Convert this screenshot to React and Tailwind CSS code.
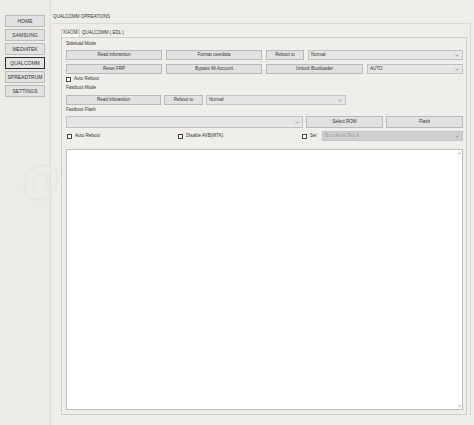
import React from "react";

const font = { fontFamily: '"Liberation Sans", Arial, sans-serif' };

function Btn({ children, className = "" }) {
  return (
    <div
      className={
        "flex items-center justify-center bg-[#e1e1e1] border border-[#b9b9b9] text-[4.5px] text-[#333] leading-none " +
        className
      }
    >
      {children}
    </div>
  );
}

function Chevron() {
  return (
    <svg width="4" height="3" viewBox="0 0 4 3" className="shrink-0">
      <path d="M0.5 0.6 L2 2.2 L3.5 0.6" fill="none" stroke="#777" strokeWidth="0.6" />
    </svg>
  );
}

function Select({ children, className = "", disabled = false }) {
  return (
    <div
      className={
        "flex items-center justify-between pl-[2px] pr-[3px] border text-[4.5px] leading-none " +
        (disabled
          ? "bg-[#cfcfcf] border-[#c4c4c4] text-[#9a9a9a] "
          : "bg-[#e6e6e6] border-[#c2c2c2] text-[#333] ") +
        className
      }
    >
      <span>{children}</span>
      <Chevron />
    </div>
  );
}

function Check({ label, className = "" }) {
  return (
    <div className={"flex items-center gap-[3px] " + className}>
      <div className="w-[5px] h-[5px] bg-white border border-[#444]" />
      <span className="text-[4.5px] text-[#333] leading-none">{label}</span>
    </div>
  );
}

function NavBtn({ children, active }) {
  return (
    <div
      className={
        "h-[12px] flex items-center justify-center text-[5px] text-[#333] leading-none " +
        (active
          ? "bg-[#e3e3e3] border border-[#2b2b2b]"
          : "bg-[#e1e1e1] border border-[#bdbdbd]")
      }
    >
      {children}
    </div>
  );
}

function Label({ children, className = "" }) {
  return (
    <div className={"h-[6px] flex items-center text-[4.5px] text-[#333] leading-none " + className}>
      {children}
    </div>
  );
}

export default function App() {
  return (
    <div
      className="relative w-[474px] h-[425px] bg-[#eeede9] flex overflow-hidden"
      style={font}
    >
      {/* left nav */}
      <div className="w-[51px] h-full border-r border-[#dedcd7] bg-[#ecebe6] pt-[15px] px-[5px] flex flex-col gap-[2px]">
        <NavBtn>HOME</NavBtn>
        <NavBtn>SAMSUNG</NavBtn>
        <NavBtn>MEDIATEK</NavBtn>
        <NavBtn active>QUALCOMM</NavBtn>
        <NavBtn>SPREADTRUM</NavBtn>
        <NavBtn>SETTINGS</NavBtn>
      </div>

      {/* main */}
      <div className="flex-1 flex flex-col pl-[2px] pr-[3px] pt-[14px] pb-[10px]">
        <div className="h-[6px] flex items-center text-[4.5px] text-[#333] leading-none">
          QUALCOMM OPREATIONS
        </div>
        <div className="flex-1 flex flex-col mt-[3px] border-t border-r border-[#dcdad5] pl-[8px] pr-[3px] pt-[5px]">
          {/* tab headers */}
          <div className="flex items-end h-[8px]">
            <div className="h-[8px] px-[2px] w-[19px] flex items-center justify-center bg-[#f8f8f6] border border-b-0 border-[#d0cec9] text-[4.5px] text-[#333] leading-none">
              XIAOMI
            </div>
            <div className="h-[7px] px-[2px] flex items-center text-[4.5px] text-[#333] leading-none">
              QUALCOMM ( EDL )
            </div>
          </div>
          {/* tab page */}
          <div className="flex-1 flex flex-col border border-[#d0cec9] bg-[#efeeea] pl-[4px] pr-[3px] pb-[4px]">
            <Label className="mt-[3px]">Sideload Mode</Label>
            <div className="mt-[3px] flex h-[10px] gap-[4px]">
              <Btn className="w-[96px]">Read inforantion</Btn>
              <Btn className="w-[96px]">Format userdata</Btn>
              <Btn className="w-[38px]">Reboot to</Btn>
              <Select className="flex-1">Normal</Select>
            </div>
            <div className="mt-[4px] flex h-[10px] gap-[4px]">
              <Btn className="w-[96px]">Reset FRP</Btn>
              <Btn className="w-[96px]">Bypass Mi Account</Btn>
              <Btn className="w-[97px]">Unlock Bootloader</Btn>
              <Select className="flex-1">AUTO</Select>
            </div>
            <Check className="mt-[2px] h-[6px]" label="Auto Reboot" />
            <Label className="mt-[3px]">Fastboot Mode</Label>
            <div className="mt-[4px] flex h-[10px] gap-[3px]">
              <Btn className="w-[95px]">Read inforantion</Btn>
              <Btn className="w-[39px]">Reboot to</Btn>
              <Select className="w-[140px]">Normal</Select>
            </div>
            <Label className="mt-[2px]">Fastboot Flash</Label>
            <div className="mt-[3px] flex h-[12px] gap-[3px]">
              <Select className="w-[237px]"></Select>
              <Btn className="w-[77px]">Select ROM</Btn>
              <Btn className="w-[77px]">Flash</Btn>
            </div>
            <div className="mt-[3px] flex h-[10px] items-center">
              <Check className="w-[112px] pl-[1px]" label="Auto Reboot" />
              <Check className="w-[124px]" label="Disable AVB(MTK)" />
              <Check className="w-[20px]" label="Set" />
              <Select disabled className="flex-1 h-[10px]">Boot From Slot A</Select>
            </div>
            <div className="relative mt-[8px] flex-1 bg-white border border-[#bdbdbd]">
              <div className="absolute right-[1px] top-[1px] w-[4px] h-[4px] flex items-center justify-center">
                <svg width="3" height="2" viewBox="0 0 3 2">
                  <path d="M0 2 L1.5 0 L3 2 Z" fill="#b5b5b5" />
                </svg>
              </div>
              <div className="absolute right-[1px] bottom-[1px] w-[4px] h-[4px] flex items-center justify-center">
                <svg width="3" height="2" viewBox="0 0 3 2">
                  <path d="M0 0 L1.5 2 L3 0 Z" fill="#b5b5b5" />
                </svg>
              </div>
            </div>
          </div>
        </div>
      </div>

      {/* faint watermark */}
      <div className="pointer-events-none absolute left-[20px] top-[160px] text-[42px] leading-none text-[#e7e5e1] opacity-60">
        @
      </div>
    </div>
  );
}
